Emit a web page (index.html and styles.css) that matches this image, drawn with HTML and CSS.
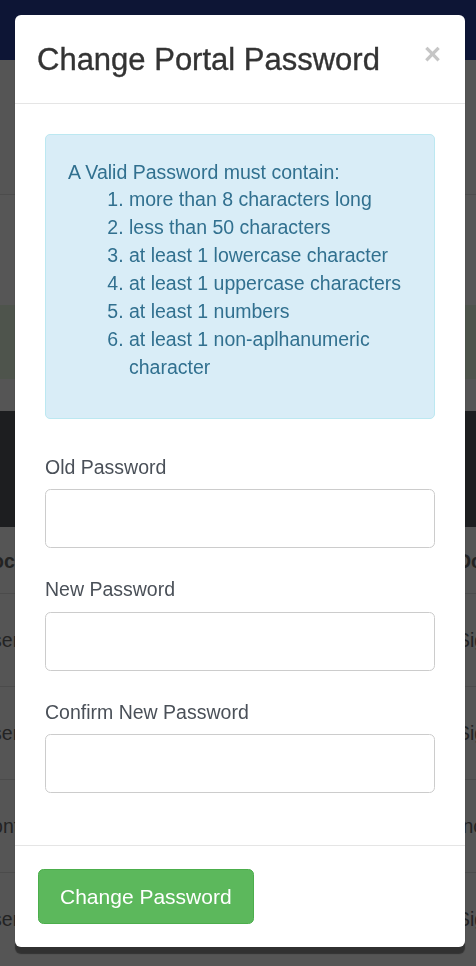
FILE: index.html
```html
<!DOCTYPE html>
<html lang="en">
<head>
<meta charset="utf-8">
<title>Change Portal Password</title>
<link rel="stylesheet" href="styles.css">
</head>
<body>
<div class="page">
  <div class="navbar"></div>
  <div class="sec sec-a"></div>
  <div class="sec sec-b"></div>
  <div class="sec sec-green"></div>
  <div class="sec sec-gap"></div>
  <div class="sec sec-dark"></div>
  <div class="table">
    <div class="cell head">Document Name</div>
    <div class="cell head">Document Status</div>
    <div class="cell">User Guide</div>
    <div class="cell">Signed</div>
    <div class="cell">User Manual</div>
    <div class="cell">Signed</div>
    <div class="cell">Contract</div>
    <div class="cell">Incomplete</div>
    <div class="cell">User Policy</div>
    <div class="cell">Signed</div>
  </div>
</div>

<div class="modal">
  <div class="modal-header">
    <h4 class="modal-title">Change Portal Password</h4>
    <button class="close" type="button">&times;</button>
  </div>
  <div class="modal-body">
    <div class="alert">
      A Valid Password must contain:
      <ol class="rules">
        <li>more than 8 characters long</li>
        <li>less than 50 characters</li>
        <li>at least 1 lowercase character</li>
        <li>at least 1 uppercase characters</li>
        <li>at least 1 numbers</li>
        <li>at least 1 non-aplhanumeric character</li>
      </ol>
    </div>
    <div class="form-group">
      <label class="label">Old Password</label>
      <input class="input" type="password">
    </div>
    <div class="form-group">
      <label class="label">New Password</label>
      <input class="input" type="password">
    </div>
    <div class="form-group">
      <label class="label">Confirm New Password</label>
      <input class="input" type="password">
    </div>
  </div>
  <div class="modal-footer">
    <button class="btn" type="button">Change Password</button>
  </div>
</div>
</body>
</html>
```
FILE: styles.css
```css
html, body {
  margin: 0;
  padding: 0;
  overflow: hidden;
  background: #555555;
  font-family: "Liberation Sans", Arial, Helvetica, sans-serif;
}

.page {
  width: 476px;
  overflow: hidden;
}

.navbar {
  height: 60px;
  background: #0d1535;
}

.sec-a {
  height: 134px;
  background: #555555;
  border-bottom: 1px solid #4c4c4c;
}

.sec-b {
  height: 110px;
  background: #565656;
}

.sec-green {
  height: 74px;
  background: #4e544c;
}

.sec-gap {
  height: 32px;
  background: #555555;
}

.sec-dark {
  height: 116px;
  background: #1d1e20;
}

.table {
  display: grid;
  grid-template-columns: 479px 300px;
  margin-left: -22px;
  width: 779px;
}

.cell {
  height: 92px;
  display: flex;
  align-items: center;
  border-top: 1px solid #4b4b4b;
  font-size: 19.5px;
  color: #232323;
  white-space: nowrap;
}

.cell.head {
  height: 66px;
  border-top: none;
  font-weight: bold;
  padding-top: 2px;
  box-sizing: border-box;
}

/* Modal */
.modal {
  position: fixed;
  top: 15px;
  left: 15px;
  width: 450px;
  background: #ffffff;
  border-radius: 6px;
  box-shadow: 0 7px 1px rgba(0, 0, 0, 0.42);
}

.modal-header {
  display: flex;
  justify-content: space-between;
  align-items: flex-start;
  padding: 22px 24px 21px 22px;
  border-bottom: 1px solid #e5e5e5;
}

.modal-title {
  margin: 0;
  font-size: 31px;
  line-height: 45px;
  font-weight: normal;
  color: #333333;
  -webkit-text-stroke: 0.35px #333333;
}

.close {
  border: none;
  background: none;
  padding: 0;
  margin-top: 3px;
  font-family: "Liberation Sans", Arial, sans-serif;
  font-size: 29px;
  font-weight: bold;
  line-height: 1;
  color: #c6c6c6;
}

.modal-body {
  padding: 30px 30px 24px 30px;
}

.alert {
  background: #d9edf7;
  border: 1px solid #bce8f1;
  border-radius: 5px;
  color: #31708f;
  font-size: 19.5px;
  line-height: 27.86px;
  padding: 23.5px 21px 36.5px 22px;
  margin-bottom: 35px;
}

.rules {
  margin: 0;
  padding-left: 61px;
}

.form-group {
  margin-bottom: 27.9px;
}

.label {
  display: block;
  font-size: 19.5px;
  line-height: 27.86px;
  color: #4a5058;
  margin-bottom: 7.6px;
}

.input {
  display: block;
  width: 100%;
  height: 59px;
  box-sizing: border-box;
  border: 1px solid #cccccc;
  border-radius: 5.5px;
  background: #ffffff;
  margin: 0;
}

.modal-footer {
  border-top: 1px solid #e5e5e5;
  padding: 23px 23px 23px 23px;
}

.btn {
  display: block;
  height: 55px;
  padding: 0 21px;
  background: #5cb85c;
  border: 1px solid #4cae4c;
  border-radius: 5.5px;
  color: #ffffff;
  font-family: "Liberation Sans", Arial, sans-serif;
  font-size: 21px;
  line-height: 1;
}
```
